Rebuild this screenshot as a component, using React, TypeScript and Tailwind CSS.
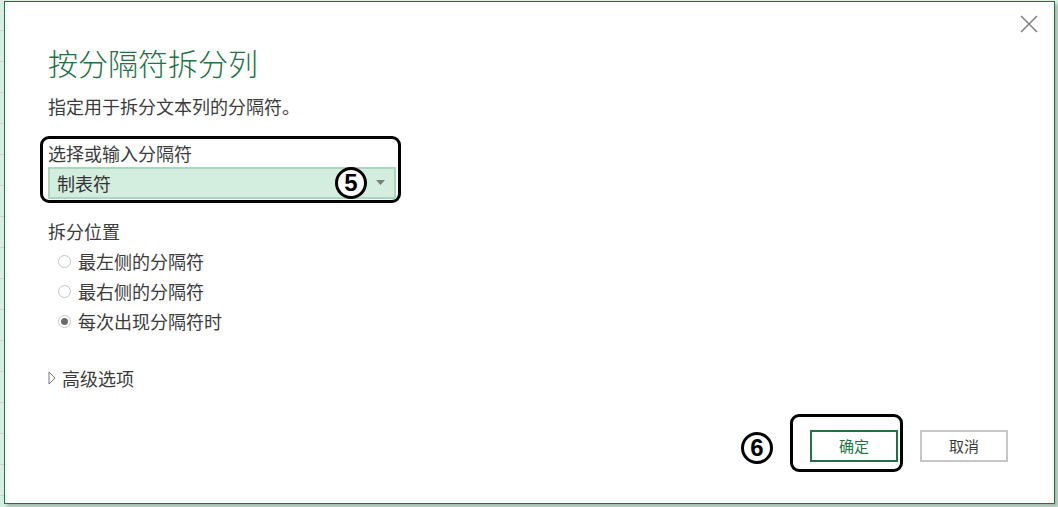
import React, { useState } from 'react';

const font = { fontFamily: '"Noto Sans CJK SC", "Noto Sans", sans-serif' };

function CircledNum({ n }: { n: string }) {
  return (
    <div className="flex h-[32px] w-[32px] items-center justify-center rounded-full border-[3px] border-black bg-white">
      <span className="text-[24px] leading-none font-bold text-black [font-family:'Liberation_Sans',sans-serif]">{n}</span>
    </div>
  );
}

function Radio({ label, checked, onClick }: { label: string; checked: boolean; onClick: () => void }) {
  return (
    <div onClick={onClick} className="flex h-[30px] cursor-pointer items-center pl-[10px]">
      <span className="flex h-[13px] w-[13px] items-center justify-center rounded-full border border-[#c4c4c4] bg-white">
        {checked && <span className="h-[7px] w-[7px] rounded-full bg-[#6b6b6b]" />}
      </span>
      <span className="ml-[7px] text-[18px] leading-[24px] text-[#3c3c3c]">{label}</span>
    </div>
  );
}

export default function App() {
  const [position, setPosition] = useState('each');

  return (
    <div className="flex h-[507px] w-[1058px] overflow-hidden bg-[#d5efe0]" style={font}>
      {/* spreadsheet behind the dialog */}
      <div className="flex w-[4px] flex-col">
        {Array.from({ length: 17 }).map((_, i) => (
          <div key={i} className="h-[31px] shrink-0 border-b border-[#c3d6ca]" />
        ))}
      </div>

      {/* dialog */}
      <div className="relative mt-[1px] flex h-[503px] w-[1051px] flex-col border border-[#217346] bg-white pr-[46px] pl-[43px] shadow-[3px_3px_3px_rgba(0,0,0,0.22)]">
        <button className="absolute top-[11px] right-[14px] p-[1px]">
          <svg width="20" height="20" viewBox="0 0 20 20">
            <path d="M2 2 L18 18 M18 2 L2 18" stroke="#7a7a7a" strokeWidth="1.4" fill="none" />
          </svg>
        </button>

        <h1 className="mt-[40px] text-[30px] leading-[40px] font-light text-[#217346]">按分隔符拆分列</h1>
        <p className="mt-[12px] text-[18px] leading-[24px] text-[#3c3c3c]">指定用于拆分文本列的分隔符。</p>

        {/* delimiter select, annotated */}
        <div className="mt-[18px] -ml-[8px] w-[361px] rounded-[9px] border-[3px] border-black pt-[2px] pr-[2px] pb-[1px] pl-[5px]">
          <div className="text-[18px] leading-[24px] text-[#3c3c3c]">选择或输入分隔符</div>
          <div className="mt-[2px] flex h-[32px] items-center border-2 border-[#a6d9bb] bg-[#d3eedf] pr-[9px] pl-[7px]">
            <span className="flex-1 text-[18px] leading-[24px] text-[#333]">制表符</span>
            <CircledNum n="5" />
            <svg className="ml-[9px]" width="9" height="6" viewBox="0 0 9 6">
              <path d="M0 0 L9 0 L4.5 5 Z" fill="#7d7d7d" />
            </svg>
          </div>
        </div>

        <div className="mt-[16px] text-[18px] leading-[24px] text-[#3c3c3c]">拆分位置</div>
        <div className="mt-[3px] flex flex-col">
          <Radio label="最左侧的分隔符" checked={position === 'left'} onClick={() => setPosition('left')} />
          <Radio label="最右侧的分隔符" checked={position === 'right'} onClick={() => setPosition('right')} />
          <Radio label="每次出现分隔符时" checked={position === 'each'} onClick={() => setPosition('each')} />
        </div>

        <div className="mt-[30px] flex items-center">
          <svg width="8" height="14" viewBox="0 0 8 14">
            <path d="M1 1 L7 7 L1 13 Z" fill="none" stroke="#777" strokeWidth="1" />
          </svg>
          <span className="ml-[6px] text-[18px] leading-[24px] text-[#3c3c3c]">高级选项</span>
        </div>

        {/* footer */}
        <div className="mt-auto mb-[31px] flex items-center justify-end">
          <div className="mt-[10px]">
            <CircledNum n="6" />
          </div>
          <div className="ml-[17px] rounded-[9px] border-[3px] border-black pt-[13px] pr-[2px] pb-[7px] pl-[17px]">
            <button className="h-[32px] w-[88px] border-2 border-[#217346] bg-white text-[15px] text-[#217346]">确定</button>
          </div>
          <button className="mt-[6px] ml-[17px] h-[32px] w-[88px] border-2 border-[#c6c6c6] bg-white text-[15px] text-[#3c3c3c]">取消</button>
        </div>
      </div>
    </div>
  );
}
